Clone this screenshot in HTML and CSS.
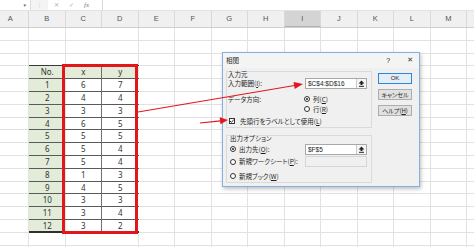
FILE: index.html
```html
<!DOCTYPE html>
<html lang="ja">
<head>
<meta charset="utf-8">
<link rel="stylesheet" href="styles.css">
</head>
<body>
<div class="app">
  <div class="fbar">
    <div class="namebox"><span class="dd">▾</span></div>
    <div class="dots">⋮</div>
    <div class="fbtns"><span>✕</span><span>✓</span><span class="fx">fx</span></div>
    <div class="finput"></div>
  </div>
  <div class="colhead">
    <div class="ch">A</div><div class="ch">B</div><div class="ch">C</div><div class="ch">D</div><div class="ch">E</div><div class="ch">F</div><div class="ch">G</div><div class="ch">H</div><div class="ch sel">I</div><div class="ch">J</div><div class="ch">K</div><div class="ch">L</div><div class="ch">M</div>
  </div>
  <div class="grid">
    <div class="tbl">
      <div class="c g hd">No.</div><div class="c g hd mid">x</div><div class="c g hd">y</div>
      <div class="c g">1</div><div class="c mid">6</div><div class="c">7</div>
      <div class="c g">2</div><div class="c mid">4</div><div class="c">4</div>
      <div class="c g">3</div><div class="c mid">3</div><div class="c">3</div>
      <div class="c g">4</div><div class="c mid">6</div><div class="c">5</div>
      <div class="c g">5</div><div class="c mid">5</div><div class="c">5</div>
      <div class="c g">6</div><div class="c mid">5</div><div class="c">4</div>
      <div class="c g">7</div><div class="c mid">5</div><div class="c">4</div>
      <div class="c g">8</div><div class="c mid">1</div><div class="c">3</div>
      <div class="c g">9</div><div class="c mid">4</div><div class="c">5</div>
      <div class="c g">10</div><div class="c mid">3</div><div class="c">3</div>
      <div class="c g">11</div><div class="c mid">3</div><div class="c">4</div>
      <div class="c g last">12</div><div class="c mid last">3</div><div class="c last">2</div>
    </div>
  </div>

  <div class="redbox"></div>

  <div class="dlg">
    <div class="dtitle"><span class="ttext">相関</span><span class="sp"></span><span class="q">?</span><span class="x">✕</span></div>
    <div class="dbody">
      <div class="dleft">
        <div class="grp g1">
          <div class="glabel">入力元</div>
          <div class="row r1">
            <span>入力範囲(<u>I</u>):</span>
            <div class="inp"><span class="val">$C$4:$D$16</span><span class="cbtn"><svg width="7" height="7" viewBox="0 0 7 7"><path d="M3.5 0.5 L6.5 3.5 H4.5 V5 H2.5 V3.5 H0.5 Z" fill="#222"/><rect x="1" y="5.8" width="5" height="1" fill="#222"/></svg></span></div>
          </div>
          <div class="row r2">
            <span class="lab2">データ方向:</span>
            <div class="radios">
              <div class="rad"><span class="rc on"></span><span>列(<u>C</u>)</span></div>
              <div class="rad"><span class="rc"></span><span>行(<u>R</u>)</span></div>
            </div>
          </div>
          <div class="row r3">
            <span class="cb"><svg width="6" height="6" viewBox="0 0 6 6"><path d="M1 3 L2.4 4.4 L5 1.4" fill="none" stroke="#222" stroke-width="0.9"/></svg></span>
            <span>先頭行をラベルとして使用(<u>L</u>)</span>
          </div>
        </div>
        <div class="grp g2">
          <div class="glabel">出力オプション</div>
          <div class="row o1">
            <div class="rad"><span class="rc on"></span><span>出力先(<u>O</u>):</span></div>
            <div class="inp"><span class="val">$F$5</span><span class="cbtn"><svg width="7" height="7" viewBox="0 0 7 7"><path d="M3.5 0.5 L6.5 3.5 H4.5 V5 H2.5 V3.5 H0.5 Z" fill="#222"/><rect x="1" y="5.8" width="5" height="1" fill="#222"/></svg></span></div>
          </div>
          <div class="row o2">
            <div class="rad"><span class="rc"></span><span>新規ワークシート(<u>P</u>):</span></div>
            <div class="inp dis"></div>
          </div>
          <div class="row o3">
            <div class="rad"><span class="rc"></span><span>新規ブック(<u>W</u>)</span></div>
          </div>
        </div>
      </div>
      <div class="dright">
        <div class="btn def">OK</div>
        <div class="btn">キャンセル</div>
        <div class="btn">ヘルプ(<u>H</u>)</div>
      </div>
    </div>
  </div>

  <svg class="arrows" width="474" height="247" viewBox="0 0 474 247">
    <line x1="138" y1="112" x2="294.5" y2="85.5" stroke="#e3161b" stroke-width="1.1"/>
    <polygon points="303,84 294.7,89 293.5,82" fill="#e3161b"/>
    <line x1="200" y1="123" x2="220.5" y2="120.9" stroke="#e3161b" stroke-width="1.1"/>
    <polygon points="228,120 220.4,124.3 219.7,117.3" fill="#e3161b"/>
  </svg>
</div>
</body>
</html>
```

FILE: styles.css
```css
html, body {
  margin: 0;
  padding: 0;
  background: #ffffff;
}
.app {
  position: relative;
  width: 474px;
  height: 247px;
  overflow: hidden;
  font-family: "Noto Sans CJK JP", "Noto Sans", sans-serif;
  background: #ffffff;
}

/* formula bar */
.fbar {
  height: 11px;
  display: flex;
  background: #f4f4f4;
  border-bottom: 1px solid #e2e2e2;
  box-sizing: border-box;
  color: #9a9a9a;
  font-family: "DejaVu Sans", sans-serif;
  font-size: 6px;
  line-height: 10px;
}
.namebox {
  width: 31px;
  background: #ffffff;
  border-right: 1px solid #dcdcdc;
  display: flex;
  justify-content: flex-end;
  padding-right: 4px;
  box-sizing: border-box;
}
.dd { color: #666; font-size: 5px; }
.dots {
  width: 17px;
  text-align: center;
  color: #b5b5b5;
}
.fbtns {
  width: 55px;
  display: flex;
  gap: 10px;
  padding-left: 6px;
  background: #ffffff;
  box-sizing: border-box;
  border-right: 1px solid #d8d8d8;
}
.fbtns span { color: #b0b0b0; }
.fx { font-style: italic; font-family: "Liberation Serif", serif; font-size: 7px; color: #777 !important; }
.finput { flex: 1; background: #ffffff; }

/* column header */
.colhead {
  height: 17px;
  display: flex;
  margin-left: -7.5px;
  background: #f0f0f0;
  border-bottom: 1px solid #cfcfcf;
  box-sizing: border-box;
}
.ch {
  flex: 0 0 36.5px;
  box-sizing: border-box;
  border-right: 1px solid #d9d9d9;
  text-align: center;
  font-family: "Liberation Sans", sans-serif;
  font-size: 7.5px;
  line-height: 16px;
  color: #555;
}
.ch.sel {
  background: #d4d4d4;
  border-bottom: 1px solid #a9b8a9;
}

/* sheet grid */
.grid {
  margin-left: -7.5px;
  width: 481.5px;
  height: 236px;
  display: grid;
  grid-template-columns: repeat(13, 36.5px);
  grid-template-rows: repeat(18, 12.8px);
  background-image:
    repeating-linear-gradient(to right, transparent 0 35.5px, #e2e2e2 35.5px 36.5px),
    repeating-linear-gradient(to bottom, transparent 0 11.8px, #e2e2e2 11.8px 12.8px);
}
.tbl {
  grid-column: 2 / 5;
  grid-row: 4 / 17;
  display: grid;
  grid-template-columns: repeat(3, 36.5px);
  grid-template-rows: repeat(13, 12.8px);
  border-top: 1px solid #3a3a3a;
  margin-top: -1px;
}
.c {
  box-sizing: border-box;
  background: #ffffff;
  border-bottom: 1px solid #5a5a5a;
  font-family: "Noto Sans", sans-serif;
  font-size: 8px;
  line-height: 11.5px;
  text-align: center;
  color: #333;
}
.c.g { background: #e2ecd9; }
.c.mid { border-right: 1px solid #707070; }
.c.last { border-bottom: 2px solid #303030; }

.redbox {
  position: absolute;
  left: 62px;
  top: 64px;
  width: 76px;
  height: 170px;
  box-sizing: border-box;
  border: 3px solid #e3161b;
}

/* dialog */
.dlg {
  position: absolute;
  left: 222px;
  top: 52px;
  width: 198px;
  height: 135px;
  box-sizing: border-box;
  border: 1px solid #86aee0;
  background: #f0f0f0;
  box-shadow: 1px 2px 4px rgba(0, 0, 0, 0.25);
  display: flex;
  flex-direction: column;
  font-size: 6.5px;
  line-height: 7px;
  color: #1e1e1e;
  font-feature-settings: "palt";
}
.dtitle {
  height: 15px;
  display: flex;
  align-items: center;
  padding-left: 3px;
  background: #f4f4f4;
}
.sp { flex: 1; }
.q { font-family: "Liberation Sans", sans-serif; font-size: 7px; margin-right: 17px; }
.x { font-family: "DejaVu Sans", sans-serif; font-size: 7px; margin-right: 6px; color: #333; }

.dbody {
  display: flex;
  gap: 6px;
  padding: 3px 7px 0 3px;
}
.dleft {
  width: 146px;
  display: flex;
  flex-direction: column;
  gap: 7px;
}
.grp {
  border: 1px solid #dadada;
  box-sizing: border-box;
  display: flex;
  flex-direction: column;
  padding: 0 4px 1px 1px;
}
.glabel { margin-top: -1px; height: 6px; line-height: 7px; }
.row {
  display: flex;
  align-items: center;
  justify-content: space-between;
}
.r1 { height: 11px; margin-top: 1px; }
.r2 { margin-top: 5px; align-items: flex-start; justify-content: flex-start; }
.lab2 { width: 76px; line-height: 10px; }
.radios { display: flex; flex-direction: column; }
.rad { display: flex; align-items: center; height: 10px; gap: 3px; }
.rc {
  width: 6px;
  height: 6px;
  box-sizing: border-box;
  border: 1px solid #333;
  border-radius: 50%;
  background: #fff;
  position: relative;
}
.rc.on::after {
  content: "";
  position: absolute;
  left: 1px;
  top: 1px;
  width: 2px;
  height: 2px;
  border-radius: 50%;
  background: #222;
}
.r3 { height: 10px; margin-top: 2px; justify-content: flex-start; gap: 5px; padding-left: 1px; }
.cb {
  width: 6px;
  height: 6px;
  box-sizing: border-box;
  border: 1px solid #333;
  background: #fff;
  display: flex;
}
.cb svg { margin: -1px; }

.inp {
  width: 62px;
  height: 11px;
  box-sizing: border-box;
  border: 1px solid #a8a8a8;
  background: #ffffff;
  display: flex;
  align-items: center;
  font-family: "Liberation Sans", sans-serif;
  font-size: 6.5px;
}
.val { flex: 1; padding-left: 2px; }
.cbtn {
  width: 9px;
  height: 9px;
  border-left: 1px solid #c8c8c8;
  display: flex;
  align-items: center;
  justify-content: center;
  background: #f6f6f6;
}
.inp.dis { background: #f0f0f0; border-color: #d6d6d6; }

.g2 { padding-left: 3px; }
.o1 { height: 10px; margin-top: 3px; }
.o2 { height: 11px; margin-top: 2px; }
.o3 { height: 10px; margin-top: 4px; }

.dright {
  width: 34px;
  display: flex;
  flex-direction: column;
  gap: 5px;
  padding-top: 2px;
}
.btn {
  height: 11px;
  box-sizing: border-box;
  border: 1px solid #adadad;
  background: #e1e1e1;
  text-align: center;
  line-height: 9px;
  font-size: 6px;
}
.btn.def {
  border-color: #2b87d8;
  background: #e3eef9;
  font-family: "Liberation Sans", sans-serif;
}

.arrows {
  position: absolute;
  left: 0;
  top: 0;
}
```
